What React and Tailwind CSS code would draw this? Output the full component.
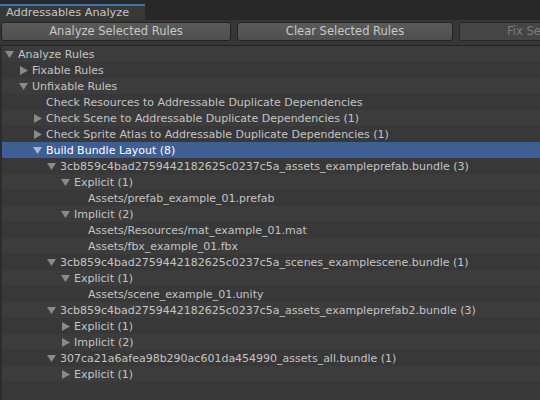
import React from "react"

const rows = [
  { depth: 0, label: "Analyze Rules", open: true },
  { depth: 1, label: "Fixable Rules", open: false },
  { depth: 1, label: "Unfixable Rules", open: true },
  { depth: 2, label: "Check Resources to Addressable Duplicate Dependencies" },
  { depth: 2, label: "Check Scene to Addressable Duplicate Dependencies (1)", open: false },
  { depth: 2, label: "Check Sprite Atlas to Addressable Duplicate Dependencies (1)", open: false },
  { depth: 2, label: "Build Bundle Layout (8)", open: true, selected: true },
  { depth: 3, label: "3cb859c4bad2759442182625c0237c5a_assets_exampleprefab.bundle (3)", open: true },
  { depth: 4, label: "Explicit (1)", open: true },
  { depth: 5, label: "Assets/prefab_example_01.prefab" },
  { depth: 4, label: "Implicit (2)", open: true },
  { depth: 5, label: "Assets/Resources/mat_example_01.mat" },
  { depth: 5, label: "Assets/fbx_example_01.fbx" },
  { depth: 3, label: "3cb859c4bad2759442182625c0237c5a_scenes_examplescene.bundle (1)", open: true },
  { depth: 4, label: "Explicit (1)", open: true },
  { depth: 5, label: "Assets/scene_example_01.unity" },
  { depth: 3, label: "3cb859c4bad2759442182625c0237c5a_assets_exampleprefab2.bundle (3)", open: true },
  { depth: 4, label: "Explicit (1)", open: false },
  { depth: 4, label: "Implicit (2)", open: false },
  { depth: 3, label: "307ca21a6afea98b290ac601da454990_assets_all.bundle (1)", open: true },
  { depth: 4, label: "Explicit (1)", open: false },
]

// indent per tree depth, 14px a level
const indent = ["pl-[3px]", "pl-[17px]", "pl-[31px]", "pl-[45px]", "pl-[59px]", "pl-[73px]"]

function Foldout({ open, selected }) {
  const fill = selected ? "#a9b8d2" : "#8a8a8a"
  if (open === undefined) return <span className="w-[13px] shrink-0" />
  return (
    <span className="w-[13px] shrink-0 flex items-center">
      {open ? (
        <svg width="9" height="7" viewBox="0 0 9 7">
          <polygon points="0,0 9,0 4.5,7" fill={fill} />
        </svg>
      ) : (
        <svg width="8" height="9" viewBox="0 0 8 9" className="ml-[1px]">
          <polygon points="0,0 8,4.5 0,9" fill={fill} />
        </svg>
      )}
    </span>
  )
}

export default function App() {
  return (
    <div
      className="w-[540px] h-[400px] overflow-hidden bg-[#282828] flex flex-col text-[11px] text-[#c4c4c4]"
      style={{ fontFamily: '"DejaVu Sans", Verdana, sans-serif' }}
    >
      {/* window tab */}
      <div className="h-[20px] shrink-0 flex items-end">
        <div className="w-[145px] h-[16px] border-t-2 border-[#3a74b4] bg-[#383838] pl-[6px] flex items-center leading-none text-[11.3px]">
          Addressables Analyze
        </div>
      </div>

      {/* toolbar */}
      <div className="h-[26px] shrink-0 bg-[#363636] flex items-start pt-[2px] pl-[1px] gap-[6px] border-b border-[#232323] text-[11.5px]">
        <button className="w-[230px] h-[19px] shrink-0 rounded-[3px] border border-[#242424] bg-gradient-to-b from-[#5a5a5a] to-[#4f4f4f] text-[#c8c8c8] leading-none">
          Analyze Selected Rules
        </button>
        <button className="w-[216px] h-[19px] shrink-0 rounded-[3px] border border-[#242424] bg-gradient-to-b from-[#5a5a5a] to-[#4f4f4f] text-[#c8c8c8] leading-none">
          Clear Selected Rules
        </button>
        <button className="w-[200px] h-[19px] shrink-0 rounded-[3px] border border-[#2a2a2a] bg-[#454545] text-[#7c7c7c] leading-none">
          Fix Selected Rules
        </button>
      </div>

      {/* rule tree */}
      <div className="flex-1 pl-[2px] bg-[#2c2c2c] flex flex-col">
        {rows.map((r, i) => (
          <div
            key={i}
            className={`h-[16px] shrink-0 flex items-center whitespace-nowrap ${indent[r.depth]} ${
              r.selected ? "bg-[#3e5f96] text-white" : i % 2 === 0 ? "bg-[#3c3c3c]" : "bg-[#383838]"
            }`}
          >
            <Foldout open={r.open} selected={r.selected} />
            <span className="leading-none pt-[1px]">{r.label}</span>
          </div>
        ))}
        <div className="flex-1 bg-[#383838]" />
      </div>
    </div>
  )
}
